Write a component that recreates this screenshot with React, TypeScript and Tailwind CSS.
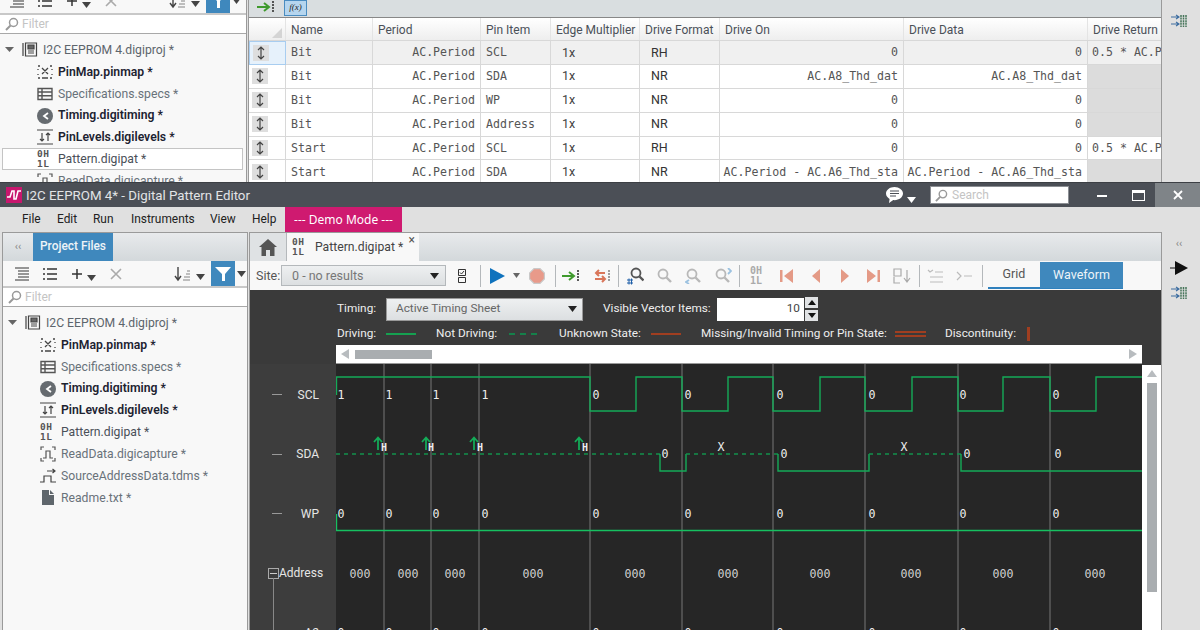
import React from "react";

const Caret = ({ className = "fill-[#444]" }: { className?: string }) => (
  <svg width="9" height="6" viewBox="0 0 9 6" className={className}>
    <path d="M0 0h9L4.5 6z" />
  </svg>
);

// Icons of the project tree
const PinMapIcon = () => (
  <svg width="16" height="16" viewBox="0 0 16 16" fill="none" stroke="#444" strokeWidth="1.3">
    <path d="M1 2h2M1 14h2M13 2h2M13 14h2M5 14h6" />
    <path d="M1 5v1M15 5v1M1 10v1M15 10v1M5 4l6 6M11 4l-6 6" />
  </svg>
);
const SpecsIcon = () => (
  <svg width="16" height="14" viewBox="0 0 16 14" fill="none" stroke="#555" strokeWidth="1.4">
    <path d="M1 1.5h14v11H1zM1 5h14M1 8.7h14M5 1.5v11" />
  </svg>
);
const TimingIcon = () => (
  <svg width="16" height="16" viewBox="0 0 16 16">
    <circle cx="8" cy="8" r="8" fill="#666b70" />
    <path d="M11 5L7 8l4 3" stroke="#fff" strokeWidth="1.8" fill="none" />
  </svg>
);
const LevelsIcon = () => (
  <svg width="16" height="16" viewBox="0 0 16 16" fill="none" stroke="#444" strokeWidth="1.2">
    <path d="M0 1h16M0 15h16M5 4v8M3 10l2 2 2-2M11 12V4M9 6l2-2 2 2" />
  </svg>
);
const PatternIcon = () => (
  <div className="flex w-[16px] flex-col font-['DejaVu_Sans_Mono',monospace] text-[9.5px] leading-[10px] font-bold tracking-[0.5px] text-[#555]">
    <span>0H</span>
    <span>1L</span>
  </div>
);
const CaptureIcon = () => (
  <svg width="16" height="16" viewBox="0 0 16 16" fill="none" stroke="#555" strokeWidth="1.2">
    <path d="M4 1H1v3M12 1h3v3M1 12v3h3M15 12v3h-3M3 12h3V5h4v7h3" />
  </svg>
);
const TdmsIcon = () => (
  <svg width="16" height="16" viewBox="0 0 16 16" fill="none" stroke="#444" strokeWidth="1.2">
    <path d="M0 14h4V8h7v6h5M7 3h8M12.5 1l2.500 2-2.500 2" />
  </svg>
);
const FileIcon = () => (
  <svg width="12" height="15" viewBox="0 0 12 15" fill="#5f666c">
    <path d="M0 0h7v5h5v10H0zM8 0l4 4H8z" />
  </svg>
);
const ProjIcon = () => (
  <svg width="16" height="15" viewBox="0 0 16 15" fill="none" stroke="#444" strokeWidth="1.2">
    <path d="M1 1v13M3.5 1h11v13h-11z" />
    <path d="M6 3h6v4H6z" fill="#666" />
    <path d="M6 9h6M6 11h6" />
  </svg>
);

const treeItems = [
  { name: "PinMap.pinmap *", bold: true, icon: <PinMapIcon /> },
  { name: "Specifications.specs *", bold: false, icon: <SpecsIcon />, dim: true },
  { name: "Timing.digitiming *", bold: true, icon: <TimingIcon /> },
  { name: "PinLevels.digilevels *", bold: true, icon: <LevelsIcon /> },
  { name: "Pattern.digipat *", bold: false, icon: <PatternIcon /> },
  { name: "ReadData.digicapture *", bold: false, icon: <CaptureIcon />, dim: true },
  { name: "SourceAddressData.tdms *", bold: false, icon: <TdmsIcon />, dim: true },
  { name: "Readme.txt *", bold: false, icon: <FileIcon />, dim: true },
];

const ProjectTree = ({ selected = false, count }: { selected?: boolean; count: number }) => (
  <div className="flex flex-col text-[12.2px]">
    <div className="flex h-[21.875px] items-center pl-[5px]">
      <svg width="9" height="6" viewBox="0 0 9 6" className="fill-[#666]">
        <path d="M0 0h9L4.5 5z" />
      </svg>
      <span className="ml-[8px] flex w-[16px] justify-center">
        <ProjIcon />
      </span>
      <span className="ml-[5px] text-[#5d656c]">I2C EEPROM 4.digiproj *</span>
    </div>
    {treeItems.slice(0, count).map((item, i) => (
      <div
        key={item.name}
        className={`flex h-[21.875px] items-center ${
          selected && i === 4 ? "mr-[3px] ml-[2px] border border-[#c4c4c4] bg-white pl-[34px]" : "pl-[37px]"
        }`}
      >
        <span className="flex w-[16px] shrink-0 justify-center">{item.icon}</span>
        <span
          className={`ml-[5px] whitespace-nowrap ${
            item.bold ? "font-semibold text-[#1c2230]" : item.dim ? "text-[#69727a]" : "text-[#4a5058]"
          }`}
        >
          {item.name}
        </span>
      </div>
    ))}
  </div>
);

const PanelTools = ({ height }: { height: string }) => (
  <div className={`flex items-end overflow-hidden border-b-2 border-[#c8c8c8] bg-[#f8f8f8] ${height}`}>
    <div className="flex h-[25px] w-full items-center">
      <span className="ml-[11px] flex w-[16px] justify-center">
        <svg width="16" height="14" viewBox="0 0 16 14" stroke="#333" strokeWidth="1.2">
          <path d="M1 1h14M4 4h11M4 7h11M4 10h11M1 13h14" />
        </svg>
      </span>
      <span className="ml-[12px] flex w-[16px] justify-center">
        <svg width="16" height="14" viewBox="0 0 16 14" stroke="#333" strokeWidth="1.4">
          <path d="M1 2h2M5 2h10M1 7h2M5 7h10M1 12h2M5 12h10" />
        </svg>
      </span>
      <span className="ml-[13px]">
        <svg width="12" height="12" viewBox="0 0 12 12" stroke="#333" strokeWidth="1.5">
          <path d="M6 1v10M1 6h10" />
        </svg>
      </span>
      <span className="ml-[4px] mt-[8px]">
        <Caret />
      </span>
      <span className="ml-[14px]">
        <svg width="12" height="12" viewBox="0 0 12 12" stroke="#aaa" strokeWidth="1.6">
          <path d="M1 1l10 10M11 1L1 11" />
        </svg>
      </span>
      <span className="ml-[52px]">
        <svg width="17" height="16" viewBox="0 0 17 16" fill="none" stroke="#444" strokeWidth="1.4">
          <path d="M4 1v13M1 10l3 4 3-4" />
          <path d="M9 14h7M10 11h6M12 8h4M13 5h3" stroke="#aaa" />
        </svg>
      </span>
      <span className="ml-[5px] mt-[6px]">
        <Caret />
      </span>
      <span className="ml-[6px] flex h-[25px] w-[24px] items-center justify-center bg-[#3f88bd]">
        <svg width="16" height="14" viewBox="0 0 16 14" fill="#fff">
          <path d="M0 0h16L10 7v7H7V7z" />
        </svg>
      </span>
      <span className="ml-[2px]">
        <Caret />
      </span>
    </div>
  </div>
);

const PanelFilter = () => (
  <div className="flex h-[19px] items-center border-b border-[#a8a8a8] bg-white pl-[5px]">
    <svg width="14" height="14" viewBox="0 0 14 14" fill="none" stroke="#999" strokeWidth="1.5">
      <circle cx="8.5" cy="5.5" r="4" />
      <path d="M5.5 8.5L1 13" strokeWidth="2" />
    </svg>
    <span className="ml-[3px] text-[12px] text-[#c4c4c4]">Filter</span>
  </div>
);

// Drive table
const monoCell = "font-['DejaVu_Sans_Mono',monospace] text-[11.6px]";
const tableCols = ["Name", "Period", "Pin Item", "Edge Multiplier", "Drive Format", "Drive On", "Drive Data", "Drive Return"];
const tableRows = [
  ["Bit", "SCL", "RH", "0", "0", "0.5 * AC.P"],
  ["Bit", "SDA", "NR", "AC.A8_Thd_dat", "AC.A8_Thd_dat", ""],
  ["Bit", "WP", "NR", "0", "0", ""],
  ["Bit", "Address", "NR", "0", "0", ""],
  ["Start", "SCL", "RH", "0", "0", "0.5 * AC.P"],
  ["Start", "SDA", "NR", "AC.Period - AC.A6_Thd_sta", "AC.Period - AC.A6_Thd_sta", ""],
];
const gridCols = "grid grid-cols-[37px_87px_108px_70px_89px_80px_184px_184px_74px]";

const Handle = () => (
  <span className="flex h-[16px] w-[16px] items-center justify-center bg-[#dedede]">
    <svg width="10" height="14" viewBox="0 0 10 14" fill="none" stroke="#444" strokeWidth="1.2">
      <path d="M5 1v12M2 4l3-3 3 3M2 10l3 3 3-3" />
    </svg>
  </span>
);

const DriveTable = () => (
  <div className="flex-1 overflow-hidden bg-white">
    <div className={`${gridCols} h-[23px] border-b border-[#d8d8d8]`}>
      <div className="relative border-r border-[#e4e4e4] bg-gradient-to-b from-white to-[#eeeeee]">
        <svg width="10" height="10" viewBox="0 0 10 10" className="absolute right-[3px] bottom-[2px] fill-[#d4d4d4]">
          <path d="M10 0v10H0z" />
        </svg>
      </div>
      {tableCols.map((c) => (
        <div
          key={c}
          className="flex items-center overflow-hidden border-r border-[#e4e4e4] bg-gradient-to-b from-white to-[#eeeeee] pt-[1px] pl-[5px] text-[12px] whitespace-nowrap text-[#4a5058]"
        >
          {c}
        </div>
      ))}
    </div>
    {tableRows.map((r, i) => (
      <div key={i} className={`${gridCols} h-[23.875px] ${i === 0 ? "bg-[#f0f0f0]" : "bg-white"}`}>
        <div
          className={`flex items-center pl-[3px] ${
            i === 0 ? "border border-[#a8cdf0] bg-[#e6f1fb]" : "border-r border-b border-[#d8d8d8]"
          }`}
        >
          <Handle />
        </div>
        <div className={`flex items-center border-r border-b border-[#d8d8d8] pt-[1px] pl-[5px] text-[#555] ${monoCell}`}>{r[0]}</div>
        <div className={`flex items-center justify-end border-r border-b border-[#d8d8d8] pt-[1px] pr-[5px] text-[#555] ${monoCell}`}>
          AC.Period
        </div>
        <div className={`flex items-center border-r border-b border-[#d8d8d8] pt-[1px] pl-[5px] text-[#555] ${monoCell}`}>{r[1]}</div>
        <div className="flex items-center border-r border-b border-[#d8d8d8] pt-[1px] pl-[11px] text-[12.5px] text-[#444]">1x</div>
        <div className="flex items-center border-r border-b border-[#d8d8d8] pt-[1px] pl-[11px] text-[12.5px] text-[#333]">{r[2]}</div>
        <div className={`flex items-center justify-end border-r border-b border-[#d8d8d8] pt-[1px] pr-[5px] whitespace-nowrap text-[#555] ${monoCell}`}>
          {r[3]}
        </div>
        <div className={`flex items-center justify-end border-r border-b border-[#d8d8d8] pt-[1px] pr-[5px] whitespace-nowrap text-[#555] ${monoCell}`}>
          {r[4]}
        </div>
        <div
          className={`flex items-center overflow-hidden border-b border-[#d8d8d8] pt-[1px] pl-[4px] whitespace-nowrap text-[#555] ${monoCell} ${
            r[5] ? "" : "bg-[#dcdcdc]"
          }`}
        >
          {r[5]}
        </div>
      </div>
    ))}
  </div>
);

const SwapIcon = () => (
  <svg width="20" height="14" viewBox="0 0 20 14" fill="none">
    <path d="M0 7h11M7 3l5 4-5 4" stroke="#3f9a2d" strokeWidth="2" />
    <path d="M16 1v12" stroke="#333" strokeWidth="1.6" strokeDasharray="2 1" />
  </svg>
);

const RailBlue = () => (
  <svg width="16" height="14" viewBox="0 0 16 14" fill="none">
    <path d="M0 3h8M5 1l3 2-3 2M0 10h8M5 8l3 2-3 2" stroke="#3c6da0" strokeWidth="1.1" />
    <path d="M10 1v12M12.5 1v12M15 1v12" stroke="#46755a" strokeWidth="1.5" strokeDasharray="2 .6" />
  </svg>
);

const TopWindow = () => (
  <div className="flex h-[182px] shrink-0 overflow-hidden bg-[#e0e0e0]">
    <div className="h-full w-[247px] shrink-0 border-r border-[#9a9a9a] bg-[#f8f8f8]">
      <div className="-ml-[2px]">
        <PanelTools height="h-[15px]" />
      </div>
      <PanelFilter />
      <div className="pt-[5px]">
        <ProjectTree selected count={6} />
      </div>
    </div>
    <div className="ml-[1px] flex h-full w-[914px] shrink-0 flex-col border-x border-[#9a9a9a]">
      <div className="flex h-[18px] shrink-0 items-start border-b border-[#888] bg-[#d9dee0] pl-[8px]">
        <SwapIcon />
        <span className="ml-[7px] flex h-[16px] w-[23px] items-center justify-center border border-[#4a8cc0] bg-[#b5d5ee] font-['Liberation_Serif',serif] text-[9px] text-[#222] italic">
          f(x)
        </span>
      </div>
      <DriveTable />
    </div>
    <div className="flex flex-1 justify-center pt-[13px] pr-[4px]">
      <span className="mt-[1px]">
        <RailBlue />
      </span>
    </div>
  </div>
);

// Editor window
const TitleBar = () => (
  <div className="flex h-[25px] shrink-0 items-center border-t border-[#3c3f44] bg-[#4b4f56] pl-[6px]">
    <span className="flex h-[16px] w-[16px] items-center justify-center bg-[#c8176e]">
      <svg width="14" height="10" viewBox="0 0 14 10" fill="none" stroke="#fff" strokeWidth="1.6">
        <path d="M0 7h3l2-6h2v8h2l2-8h3" />
      </svg>
    </span>
    <span className="ml-[4px] pt-[2px] text-[13.3px] text-[#e2e4e6]">I2C EEPROM 4* - Digital Pattern Editor</span>
    <div className="ml-auto flex items-center">
      <svg width="17" height="16" viewBox="0 0 17 16" fill="#fff">
        <path d="M8.500 0C3.800 0 0 2.900 0 6.600c0 2.300 1.400 4.200 3.600 5.400L3 16l4.300-2.900c.4 0 .8.100 1.200.100 4.700 0 8.500-3 8.500-6.600S13.200 0 8.500 0z" />
        <path d="M4 4h9M4 6.500h9M4 9h6" stroke="#4b4f56" strokeWidth="1" />
      </svg>
      <span className="ml-[4px] mt-[10px]">
        <Caret className="fill-white" />
      </span>
      <div className="ml-[14px] flex h-[18px] w-[139px] items-center border border-[#8c8f94] bg-white pl-[4px]">
        <svg width="13" height="13" viewBox="0 0 14 14" fill="none" stroke="#999" strokeWidth="1.5">
          <circle cx="8.5" cy="5.5" r="4" />
          <path d="M5.5 8.5L1 13" strokeWidth="2" />
        </svg>
        <span className="ml-[4px] text-[12px] text-[#c4c4c4]">Search</span>
      </div>
      <span className="ml-[28px] h-[2px] w-[10px] translate-y-[1px] bg-white" />
      <span className="ml-[25px] h-[11px] w-[13px] border border-t-[3px] border-white" />
      <span className="ml-[10px] flex h-[24px] w-[45px] items-center justify-center bg-[#7f8488]">
        <svg width="10" height="10" viewBox="0 0 10 10" stroke="#fff" strokeWidth="1.8">
          <path d="M1 1l8 8M9 1L1 9" />
        </svg>
      </span>
    </div>
  </div>
);

const menus = [
  { t: "File", c: "w-[35px]" },
  { t: "Edit", c: "w-[36px]" },
  { t: "Run", c: "w-[38px]" },
  { t: "Instruments", c: "w-[79px]" },
  { t: "View", c: "w-[42px]" },
  { t: "Help", c: "w-[33px]" },
];

const MenuBar = () => (
  <div className="flex h-[25px] shrink-0 items-stretch bg-[#e0e0e0] pl-[22px] text-[11.9px] text-[#222]">
    {menus.map((m) => (
      <span key={m.t} className={`flex items-center ${m.c}`}>
        {m.t}
      </span>
    ))}
    <span className="flex w-[117px] items-center justify-center bg-[#cf1a70] font-['Noto_Sans',sans-serif] text-[12px] text-white">
      --- Demo Mode ---
    </span>
  </div>
);

const Sep = ({ c = "" }: { c?: string }) => <span className={`h-[22px] w-px shrink-0 bg-[#b4b8bb] ${c}`} />;

const Mag = ({ color = "#b8b8b8", extra }: { color?: string; extra?: React.ReactNode }) => (
  <svg width="18" height="16" viewBox="0 0 18 16" fill="none" stroke={color} strokeWidth="1.8">
    <circle cx="7" cy="6" r="4.5" />
    <path d="M10.5 9.5l4.5 4.5" strokeWidth="2.4" />
    {extra}
  </svg>
);

const Salmon = ({ d }: { d: string }) => (
  <svg width="13" height="14" viewBox="0 0 13 14" fill="#e49a86">
    <path d={d} />
  </svg>
);

const Tool = ({ w, children }: { w: string; children: React.ReactNode }) => (
  <span className={`flex shrink-0 items-center justify-center ${w}`}>{children}</span>
);

const EditorToolbar = () => (
  <div className="flex h-[29px] shrink-0 items-center bg-[#f8f8f8]">
    <span className="w-[31px] pt-[1px] pl-[6px] text-[12.5px] text-[#555]">Site:</span>
    <div className="flex h-[21px] w-[165px] shrink-0 items-center justify-between border border-[#b4b8bb] bg-gradient-to-b from-[#eef0f1] to-[#dcdfe1] pt-[1px] pr-[6px] pl-[10px] text-[12.5px] text-[#777]">
      0 - no results
      <Caret className="fill-[#222]" />
    </div>
    <Tool w="w-[32px]">
      <svg width="10" height="16" viewBox="0 0 10 16" fill="none" stroke="#333">
        <path d="M1.500 1.500h7v6h-7zM1.500 9.500h7v5h-7zM3 4.500l1.500 1.500L7 3" />
      </svg>
    </Tool>
    <Sep c="ml-[2px]" />
    <Tool w="w-[32px]">
      <svg width="15" height="16" viewBox="0 0 15 16" fill="#0f72bd">
        <path d="M0 0l15 8-15 8z" />
      </svg>
    </Tool>
    <Tool w="w-[6px]">
      <svg width="7" height="5" viewBox="0 0 7 5" className="shrink-0 fill-[#666]">
        <path d="M0 0h7L3.500 5z" />
      </svg>
    </Tool>
    <Tool w="w-[36px]">
      <svg width="16" height="16" viewBox="0 0 16 16" fill="#e89a8a" stroke="#c9c9c9" strokeWidth="1.2">
        <path d="M5 .6h6L15.400 5v6L11 15.400H5L.6 11V5z" />
      </svg>
    </Tool>
    <Sep />
    <Tool w="w-[32px]">
      <SwapIcon />
    </Tool>
    <Tool w="w-[29px]">
      <svg width="17" height="14" viewBox="0 0 17 14" fill="none" stroke="#d9765a" strokeWidth="2">
        <path d="M11 4H2M5 1L2 4l3 3M1 10h10M8 7l3 3-3 3" />
        <path d="M15 1v12" stroke="#888" strokeWidth="1.6" strokeDasharray="2 1" />
      </svg>
    </Tool>
    <Sep c="ml-[1px]" />
    <Tool w="w-[31px]">
      <svg width="18" height="18" viewBox="0 0 18 18" fill="none" stroke="#555" strokeWidth="1.8">
        <circle cx="10" cy="6" r="4.500" />
        <path d="M13.500 9.500l4 4" strokeWidth="2.400" />
        <path d="M1 13h6M1 16h6M3 11.500v6M5.500 11.500v6" stroke="#1f5fa8" strokeWidth="1" />
      </svg>
    </Tool>
    <Tool w="w-[29px]">
      <Mag />
    </Tool>
    <Tool w="w-[29px]">
      <Mag extra={<path d="M4 12L1 14l3 2" stroke="#9cc2e0" />} />
    </Tool>
    <Tool w="w-[29px]">
      <Mag extra={<path d="M14 0l3 3-3 3" stroke="#9cc2e0" />} />
    </Tool>
    <Sep c="ml-[2px]" />
    <Tool w="w-[32px]">
      <div className="flex flex-col font-['DejaVu_Sans_Mono',monospace] text-[10px] leading-[10px] font-bold text-[#aaa]">
        <span>0H</span>
        <span>1L</span>
      </div>
    </Tool>
    <Tool w="w-[29px]">
      <Salmon d="M0 1h2.500v12H0zM13 0v14L4 7z" />
    </Tool>
    <Tool w="w-[29px]">
      <Salmon d="M11 0v14L3 7z" />
    </Tool>
    <Tool w="w-[29px]">
      <Salmon d="M3 0v14l8-7z" />
    </Tool>
    <Tool w="w-[28px]">
      <Salmon d="M0 0v14l9-7zM10.500 1H13v12h-2.500z" />
    </Tool>
    <Tool w="w-[29px]">
      <svg width="18" height="16" viewBox="0 0 18 16" fill="none" stroke="#aaa" strokeWidth="1.2">
        <path d="M1 1h7v7H1zM1 9v6h6M14 2v12M11 10l3 4 3-4" />
      </svg>
    </Tool>
    <Sep c="ml-[3px]" />
    <Tool w="w-[30px]">
      <svg width="16" height="14" viewBox="0 0 16 14" fill="none" stroke="#bbb" strokeWidth="1.2">
        <path d="M1 1l2 2 3-2M8 3h8M3 8h13M3 13h13" />
      </svg>
    </Tool>
    <Tool w="w-[28px]">
      <svg width="16" height="10" viewBox="0 0 16 10" fill="none" stroke="#bbb" strokeWidth="1.2">
        <path d="M1 1l4 4-4 4M8 5h8" />
      </svg>
    </Tool>
    <Sep c="ml-[4px]" />
    <span className="ml-[5px] flex h-[26px] w-[52px] items-center justify-center border-b-2 border-[#2f80bd] text-[12.5px] text-[#555]">
      Grid
    </span>
    <span className="flex h-[27px] w-[83px] items-center justify-center border-b border-[#2f80bd] bg-[#3f88bd] text-[12.5px] text-[#eef4f8]">
      Waveform
    </span>
  </div>
);

const Legend = ({ label, w, children }: { label: string; w: string; children?: React.ReactNode }) => (
  <>
    <span className={`shrink-0 whitespace-nowrap ${w}`}>{label}</span>
    {children}
  </>
);

const pinRows = [{ name: "SCL" }, { name: "SDA" }, { name: "WP" }, { name: "Address", group: true }, { name: "A2" }];

const Labels = () => (
  <div className="relative h-full w-[86px] shrink-0 bg-[#3d3d3d] pt-[1px] text-[12px] text-[#e6e6e6]">
    {pinRows.map((p) => (
      <div key={p.name} className="flex h-[59.5px] items-center pr-[17px]">
        {p.group ? (
          <span className="ml-[18px] flex h-[11px] w-[11px] shrink-0 items-center justify-center border border-[#aaa]">
            <span className="h-px w-[7px] bg-[#ccc]" />
          </span>
        ) : (
          <span className="ml-[22px] h-px w-[10px] shrink-0 bg-[#999]" />
        )}
        <span className="ml-auto">{p.name}</span>
      </div>
    ))}
    <span className="absolute top-[214px] left-[23px] h-[60px] w-px bg-[#888]" />
  </div>
);

const gridX = [384, 431, 479, 590, 682, 773, 865, 958, 1050];
const bitX = [341, 389, 436, 485, 596, 688, 780, 872, 963, 1056];
const groupX = [360, 408, 455, 533, 635, 728, 820, 911, 1003, 1095];

const Waves = () => (
  <svg width="806" height="266" viewBox="336 364 806 266" className="shrink-0 bg-[#262626]">
    {gridX.map((x) => (
      <path key={x} d={`M${x} 364V630`} stroke="#5c5c5c" strokeWidth="1.5" />
    ))}
    <g fill="none" stroke="#14ab58" strokeWidth="1.4">
      <path d="M336.5 395V377H590V411H636V377H682V411H728V377H773V411H820V377H865V411H912V377H958V411H1003V377H1050V411H1096V377H1142" />
      <path d="M336 454H660" strokeDasharray="4 4" stroke="#13914c" />
      <path d="M660 454V471H686V454" />
      <path d="M686 454H778" strokeDasharray="4 4" stroke="#13914c" />
      <path d="M778 454V471H869V454" />
      <path d="M869 454H961" strokeDasharray="4 4" stroke="#13914c" />
      <path d="M961 454V471H1142" />
      <path d="M336.5 514V530.5H1142" stroke="#16c060" />
      {[378, 426, 474, 579].map((x) => (
        <path key={x} d={`M${x} 450V438M${x - 4} 442L${x} 437.5L${x + 4} 442`} strokeWidth="1.8" />
      ))}
    </g>
    <g className="font-['DejaVu_Sans_Mono',monospace] text-[11.6px]" fill="#eeeeee" textAnchor="middle">
      {bitX.map((x, i) => (
        <text key={x} x={x} y="399">
          {i < 4 ? "1" : "0"}
        </text>
      ))}
      {[384, 431, 480, 585].map((x) => (
        <text key={x} x={x} y="451" fontWeight="bold" fontSize="10">
          H
        </text>
      ))}
      <text x="665" y="458">0</text>
      <text x="721" y="451">X</text>
      <text x="784" y="458">0</text>
      <text x="904" y="451">X</text>
      <text x="967" y="458">0</text>
      <text x="1058" y="458">0</text>
      {bitX.map((x) => (
        <text key={x} x={x} y="518">
          0
        </text>
      ))}
      {groupX.map((x) => (
        <text key={x} x={x} y="578" fill="#d0d0d0">
          000
        </text>
      ))}
      {bitX.map((x) => (
        <text key={x} x={x} y="637">
          0
        </text>
      ))}
    </g>
  </svg>
);

const EditorPane = () => (
  <div className="flex min-h-0 flex-1 flex-col overflow-hidden bg-[#3a3a3a] text-[11.8px] text-[#eeeeee]">
    <div className="flex h-[33px] shrink-0 items-center pt-[5px]">
      <span className="ml-[87px] w-[49px] shrink-0">Timing:</span>
      <div className="flex h-[23px] w-[197px] shrink-0 items-center justify-between border border-[#999] bg-gradient-to-b from-[#eef0f1] to-[#dcdfe1] pr-[5px] pl-[9px] text-[#666]">
        Active Timing Sheet
        <Caret className="fill-[#222]" />
      </div>
      <span className="ml-[20px] w-[114px] shrink-0 whitespace-nowrap">Visible Vector Items:</span>
      <div className="flex h-[23px] w-[87px] shrink-0 items-center justify-end bg-white pr-[4px] text-[#444]">10</div>
      <div className="ml-[1px] flex h-[24px] w-[13px] shrink-0 flex-col justify-between">
        <span className="flex h-[11px] items-center justify-center bg-[#e0e2e4]">
          <svg width="8" height="5" viewBox="0 0 8 5" fill="#111">
            <path d="M4 0l4 5H0z" />
          </svg>
        </span>
        <span className="flex h-[11px] items-center justify-center bg-[#e0e2e4]">
          <svg width="8" height="5" viewBox="0 0 8 5" fill="#111">
            <path d="M0 0h8L4 5z" />
          </svg>
        </span>
      </div>
    </div>
    <div className="flex h-[22px] shrink-0 items-center pl-[87px]">
      <Legend label="Driving:" w="w-[49px]">
        <span className="h-[2px] w-[30px] shrink-0 bg-[#15a050]" />
      </Legend>
      <Legend label="Not Driving:" w="ml-[20px] w-[73px]">
        <span className="h-0 w-[28px] shrink-0 border-t-2 border-dashed border-[#15804a]" />
      </Legend>
      <Legend label="Unknown State:" w="ml-[22px] w-[92px]">
        <span className="h-[2px] w-[30px] shrink-0 bg-[#a03e20]" />
      </Legend>
      <Legend label="Missing/Invalid Timing or Pin State:" w="ml-[20px] w-[194px]">
        <span className="h-[6px] w-[31px] shrink-0 border-y-2 border-[#a03e20]" />
      </Legend>
      <Legend label="Discontinuity:" w="ml-[19px] w-[82px]">
        <span className="h-[14px] w-[3px] shrink-0 bg-[#a03e20]" />
      </Legend>
    </div>
    <div className="ml-[86px] flex h-[19px] w-[806px] shrink-0 items-center border-b border-[#999] bg-white">
      <svg width="8" height="10" viewBox="0 0 8 10" fill="#b8bcbf" className="ml-[5px]">
        <path d="M8 0v10L0 5z" />
      </svg>
      <span className="ml-[6px] h-[9px] w-[77px] bg-[#a9adb0]" />
      <svg width="8" height="10" viewBox="0 0 8 10" fill="#b8bcbf" className="mr-[5px] ml-auto">
        <path d="M0 0v10l8-5z" />
      </svg>
    </div>
    <div className="flex min-h-0 flex-1">
      <Labels />
      <Waves />
      <div className="mt-[1px] flex h-full w-[19px] shrink-0 flex-col items-center bg-white pt-[5px]">
        <svg width="10" height="7" viewBox="0 0 10 7" fill="#b8bcbf">
          <path d="M5 0l5 7H0z" />
        </svg>
        <span className="mt-[6px] h-[209px] w-[10px] bg-[#a9adb0]" />
      </div>
    </div>
  </div>
);

const EditorWindow = () => (
  <div className="flex min-h-0 flex-1 flex-col">
    <TitleBar />
    <MenuBar />
    <div className="flex min-h-0 flex-1 bg-[#e0e0e0]">
      {/* Project files panel */}
      <div className="ml-[2px] flex w-[246px] shrink-0 flex-col border-x border-t border-[#9a9a9a] bg-[#f8f8f8]">
        <div className="flex h-[28px] shrink-0 bg-gradient-to-b from-[#e8eaec] to-[#d3d8db]">
          <span className="flex w-[30px] items-center justify-center text-[11px] text-[#888]">‹‹</span>
          <span className="flex w-[80px] items-center justify-center bg-[#3f88bd] text-[11.9px] font-medium text-[#eef4f8]">
            Project Files
          </span>
        </div>
        <PanelTools height="h-[27px]" />
        <PanelFilter />
        <div className="pt-[5px]">
          <ProjectTree count={8} />
        </div>
      </div>
      {/* Pattern editor */}
      <div className="ml-[1px] flex w-[913px] shrink-0 flex-col border-x border-t border-[#9a9a9a] bg-[#f8f8f8]">
        <div className="flex h-[28px] shrink-0 bg-gradient-to-b from-[#e8eaec] to-[#d3d8db]">
          <span className="flex w-[37px] items-center justify-center border-r border-[#b4b8bb] bg-[#dfe2e4]">
            <svg width="18" height="17" viewBox="0 0 18 17" fill="#555">
              <path d="M9 0L0 8h2.500v9h4.500v-6h4v6h4.500V8H18z" />
            </svg>
          </span>
          <span className="relative flex w-[132px] items-center bg-[#f8f8f8] pl-[5px] text-[12.2px] text-[#444]">
            <PatternIcon />
            <span className="ml-[7px] whitespace-nowrap">Pattern.digipat *</span>
            <span className="absolute top-[1px] right-[4px] text-[12px] leading-[12px] text-[#555]">×</span>
          </span>
        </div>
        <EditorToolbar />
        <EditorPane />
      </div>
      {/* Right rail */}
      <div className="flex flex-1 flex-col items-center pt-[5px] pr-[4px]">
        <span className="text-[11px] leading-[14px] text-[#888]">‹‹</span>
        <svg width="18" height="14" viewBox="0 0 18 14" className="mt-[10px] fill-[#111]">
          <path d="M0 6.500h5V7.500H0zM5 0l13 7-13 7z" />
        </svg>
        <span className="mt-[11px]">
          <RailBlue />
        </span>
      </div>
    </div>
  </div>
);

export default function App() {
  return (
    <div className="flex h-[630px] w-[1200px] flex-col overflow-hidden bg-[#e0e0e0] font-['Roboto',sans-serif]">
      <TopWindow />
      <EditorWindow />
    </div>
  );
}
